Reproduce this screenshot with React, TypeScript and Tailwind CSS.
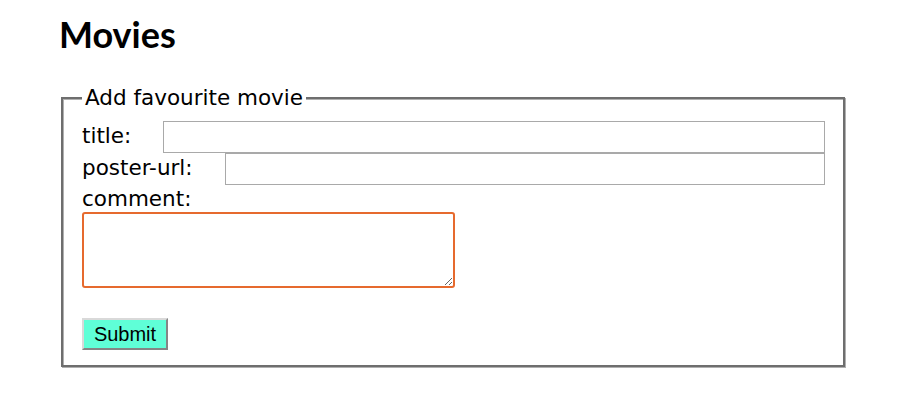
import React from "react";

export default function App() {
  return (
    <div className="bg-white min-h-[401px] pl-[59px] pt-[13px] text-black font-['DejaVu_Sans',sans-serif] text-[21.5px]">
      <h1 className="font-['Lato',sans-serif] font-bold text-[36px] leading-[42px]">Movies</h1>
      <fieldset className="mt-[30px] ml-[2px] w-[784px] border-2 border-solid border-[#6e6e6e] shadow-[inset_1px_1px_0_#b0b0b0,1px_1px_0_#b0b0b0] pt-[11px] pl-[19px] pr-[18px] pb-[15px]">
        <legend className="px-[3px] leading-[25px] bg-white">Add favourite movie</legend>
        <div className="flex h-[32px]">
          <label className="w-[81px] shrink-0 mt-[2px] leading-[25px]">title:</label>
          <input type="text" className="flex-1 min-w-0 h-[32px] border border-[#a9a9a9] bg-white outline-none" />
        </div>
        <div className="flex h-[32px]">
          <label className="w-[143px] shrink-0 mt-[2px] leading-[25px]">poster-url:</label>
          <input type="text" className="flex-1 min-w-0 h-[32px] border border-[#a9a9a9] bg-white outline-none" />
        </div>
        <label className="block mt-[1px] leading-[25px]">comment:</label>
        <textarea className="block mt-[1px] w-[373px] h-[76px] border-2 border-[#e66a2e] rounded-[3px] bg-white outline-none" />
        <button
          type="submit"
          className="block mt-[30px] w-[86px] h-[32px] border-2 border-solid border-t-[#d9d9d9] border-l-[#d9d9d9] border-r-[#858585] border-b-[#858585] bg-[#5fffd7] font-['Liberation_Sans',Arial,sans-serif] text-[20px] leading-[23px] text-black"
        >
          Submit
        </button>
      </fieldset>
    </div>
  );
}
